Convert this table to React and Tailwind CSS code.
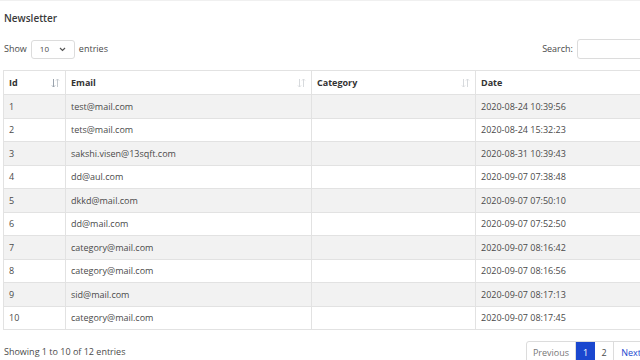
import React from "react";

const rows = [
  [1, "test@mail.com", "", "2020-08-24 10:39:56"],
  [2, "tets@mail.com", "", "2020-08-24 15:32:23"],
  [3, "sakshi.visen@13sqft.com", "", "2020-08-31 10:39:43"],
  [4, "dd@aul.com", "", "2020-09-07 07:38:48"],
  [5, "dkkd@mail.com", "", "2020-09-07 07:50:10"],
  [6, "dd@mail.com", "", "2020-09-07 07:52:50"],
  [7, "category@mail.com", "", "2020-09-07 08:16:42"],
  [8, "category@mail.com", "", "2020-09-07 08:16:56"],
  [9, "sid@mail.com", "", "2020-09-07 08:17:13"],
  [10, "category@mail.com", "", "2020-09-07 08:17:45"],
];

function SortIcon({ active }) {
  return (
    <svg width="9" height="10" viewBox="0 0 9 10" className="shrink-0">
      <path d="M2.5 1v8M1 7.5l1.5 1.5 1.5-1.5" stroke={active ? "#9aa3ad" : "#d7dadd"} strokeWidth="1" fill="none" />
      <path d="M6.5 9V1M5 2.5L6.5 1 8 2.5" stroke={active ? "#c4c9ce" : "#d7dadd"} strokeWidth="1" fill="none" />
    </svg>
  );
}

export default function App() {
  return (
    <div
      className="w-[640px] h-[360px] overflow-hidden bg-white text-[#4a4a4a] border-t border-[#f0f0f0]"
      style={{ fontFamily: '"Open Sans", "Liberation Sans", sans-serif' }}
    >
      <div className="w-[720px] pl-[3px]">
        <div className="h-[34px] flex items-center pl-[1px] text-[10px] font-semibold text-[#3a3a3a]">
          Newsletter
        </div>
        <div className="h-[28px] flex items-center justify-between text-[9px] pl-[1px]">
          <div className="flex items-center gap-[4px]">
            <span>Show</span>
            <div className="w-[44px] h-[19px] border border-[#dcdcdc] rounded-[3px] flex items-center justify-between px-[8px] text-[8px]">
              <span>10</span>
              <svg width="7" height="5" viewBox="0 0 7 5">
                <path d="M1 1l2.5 2.5L6 1" stroke="#555" strokeWidth="1.2" fill="none" />
              </svg>
            </div>
            <span>entries</span>
          </div>
          <div className="flex items-center gap-[4px] pr-[43px]">
            <span>Search:</span>
            <div className="w-[100px] h-[20px] border border-[#dcdcdc] rounded-[3px]" />
          </div>
        </div>
        <div className="h-[7px]" />
        <table className="w-[700px] border-collapse text-[9px] table-fixed">
          <colgroup>
            <col className="w-[62px]" />
            <col className="w-[246px]" />
            <col className="w-[164px]" />
            <col />
          </colgroup>
          <thead>
            <tr className="h-[24px] text-[#333] font-semibold">
              <th className="border border-[#e2e2e2] text-left px-[5px]">
                <div className="flex items-center justify-between">
                  <span>Id</span>
                  <SortIcon active />
                </div>
              </th>
              <th className="border border-[#e2e2e2] text-left px-[5px]">
                <div className="flex items-center justify-between">
                  <span>Email</span>
                  <SortIcon />
                </div>
              </th>
              <th className="border border-[#e2e2e2] text-left px-[5px]">
                <div className="flex items-center justify-between">
                  <span>Category</span>
                  <SortIcon />
                </div>
              </th>
              <th className="border border-[#e2e2e2] text-left px-[5px]">Date</th>
            </tr>
          </thead>
          <tbody>
            {rows.map((r, i) => (
              <tr key={r[0]} className={i % 2 === 0 ? "h-[23.5px] bg-[#f2f2f2]" : "h-[23.5px] bg-white"}>
                <td className="border border-[#e2e2e2] px-[5px]">{r[0]}</td>
                <td className="border border-[#e2e2e2] px-[5px]">{r[1]}</td>
                <td className="border border-[#e2e2e2] px-[5px]">{r[2]}</td>
                <td className="border border-[#e2e2e2] px-[5px]">{r[3]}</td>
              </tr>
            ))}
          </tbody>
        </table>
        <div className="flex items-start justify-between mt-[11px] text-[9px] pl-[1px]">
          <span className="mt-[4px]">Showing 1 to 10 of 12 entries</span>
          <div className="flex h-[24px] border border-[#dcdcdc] rounded-[3px] mr-[71px]">
            <span className="w-[49px] flex items-center justify-center text-[#777] border-r border-[#dcdcdc]">Previous</span>
            <span className="w-[19px] flex items-center justify-center bg-[#1a47cf] text-white">1</span>
            <span className="w-[19px] flex items-center justify-center border-r border-[#dcdcdc]">2</span>
            <span className="w-[34px] flex items-center justify-center text-[#1a47cf]">Next</span>
          </div>
        </div>
      </div>
    </div>
  );
}
